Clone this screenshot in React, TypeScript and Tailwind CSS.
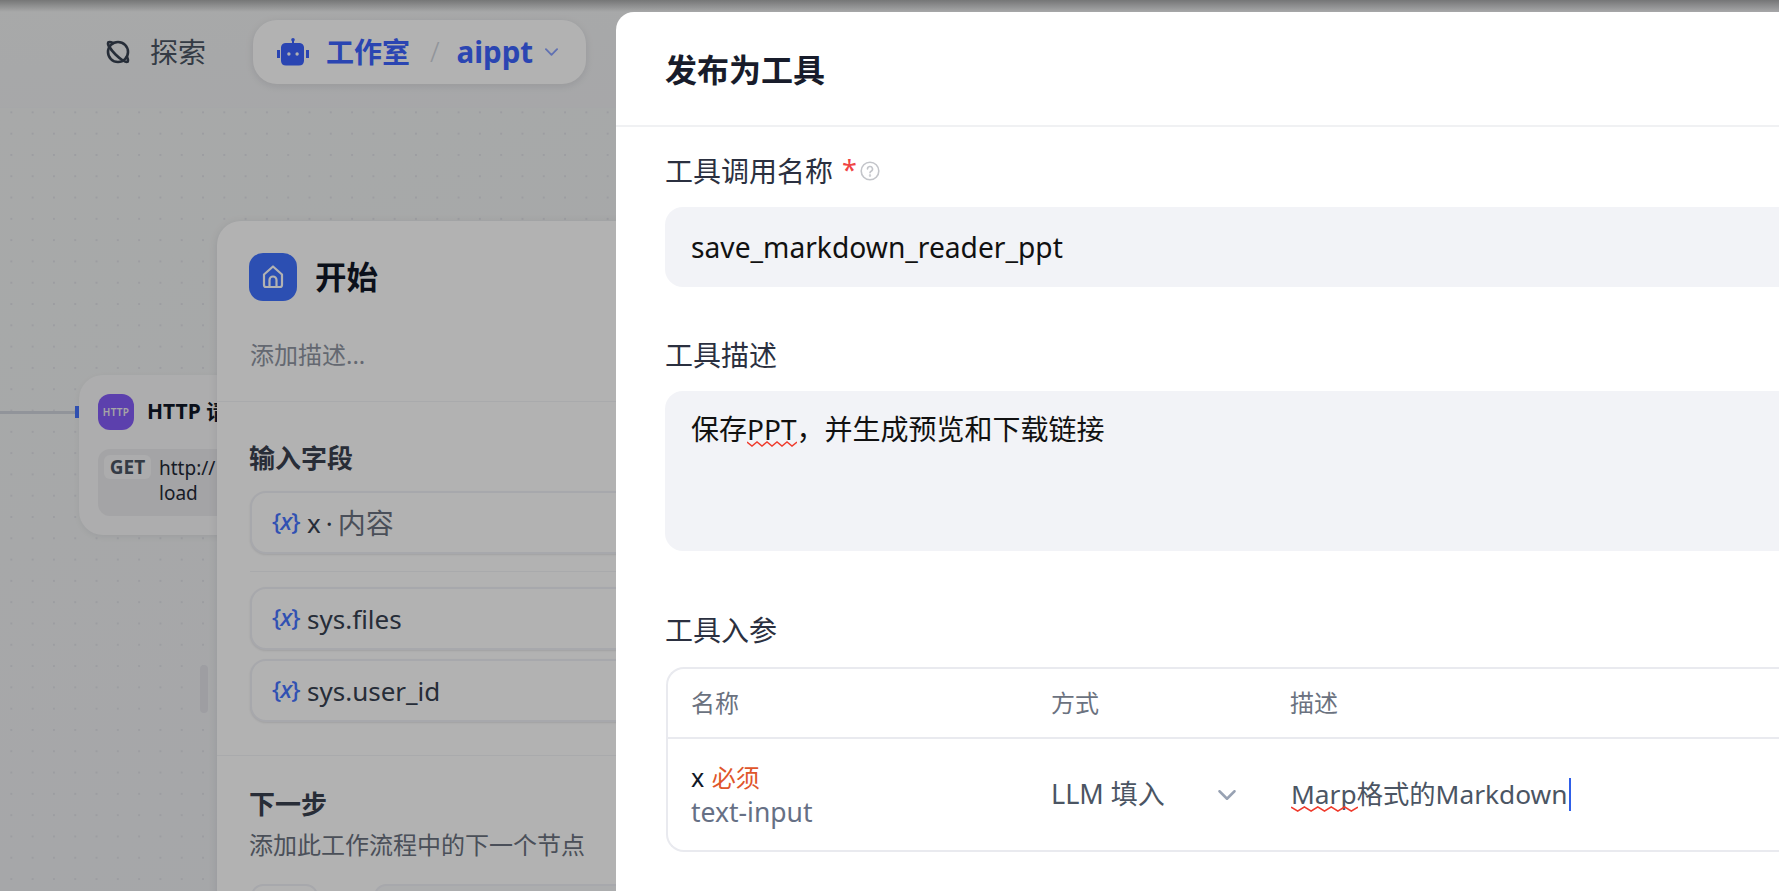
import type { ReactNode } from 'react';

function PlanetIcon() {
  return (
    <svg className="-ml-px" width="28" height="28" viewBox="0 0 28 28" fill="none" stroke="currentColor" strokeWidth="2.600" strokeLinecap="round">
      <circle cx="14" cy="14" r="10" />
      <g transform="rotate(45 14 14)">
        <path d="M.5 14A13.500 3.500 0 0 0 27.500 14" />
        <path d="M.5 14c0-1.200 1.200-2 3.500-2.800M27.500 14c0-1.200-1.200-2-3.500-2.800" />
      </g>
    </svg>
  );
}

function RobotIcon() {
  return (
    <svg width="32" height="28" viewBox="0 0 32 28" fill="#3d63ff">
      <circle cx="16" cy="1.800" r="1.800" />
      <rect x="15" y="2" width="2" height="4" />
      <path fillRule="evenodd" d="M9 5h14a5 5 0 0 1 4 4v14a5 5 0 0 1-5 4.500H9a5 5 0 0 1-5-4.500V9a5 5 0 0 1 5-4ZM10.200 16a1.700 1.700 0 1 0 3.400 0 1.700 1.700 0 0 0-3.400 0Zm8.200 0a1.700 1.700 0 1 0 3.400 0 1.700 1.700 0 0 0-3.400 0Z" />
      <rect x="0" y="12" width="3" height="8" />
      <rect x="29" y="12" width="3" height="8" />
    </svg>
  );
}

function HomeIcon() {
  return (
    <svg width="24" height="26" viewBox="0 0 24 26" fill="none" stroke="white" strokeWidth="2.200" strokeLinejoin="round">
      <path d="M3 10.500 12 2.500l9 8V21a2 2 0 0 1-2 2H5a2 2 0 0 1-2-2Z" />
      <path d="M8.500 23v-7a3.500 3.500 0 0 1 7 0v7" />
    </svg>
  );
}

function Chevron({ className }: { className: string }) {
  return (
    <svg className={className} viewBox="0 0 14 8" fill="none" stroke="currentColor" strokeWidth="2" strokeLinecap="round" strokeLinejoin="round">
      <path d="M1 1l6 6 6-6" />
    </svg>
  );
}

function Squiggle({ className }: { className: string }) {
  return (
    <svg className={className} viewBox="0 0 50 6" fill="none" stroke="#ef3b2d" strokeWidth="1.400" preserveAspectRatio="none">
      <path d="M0 1l5 4 5-4 5 4 5-4 5 4 5-4 5 4 5-4 5 4 5-4" />
    </svg>
  );
}

function VarRow({ children, className }: { children: ReactNode; className: string }) {
  return (
    <div className={`flex h-[63px] items-center rounded-2xl border-2 border-[#f0f1f6] bg-white pl-5 shadow-[0_1px_2px_rgba(16,24,40,0.1)] ${className}`}>
      <span className="mb-[3px] mr-[8px] w-[27px] whitespace-nowrap text-[24px] font-medium leading-none tracking-[-1px] text-[#4775ff]">
        {'{'}<span className="italic">x</span>{'}'}
      </span>
      <span className="flex items-center text-[26px] leading-none text-[#374151]">{children}</span>
    </div>
  );
}

function Canvas() {
  return (
    <div className="relative flex-1 overflow-hidden bg-gradient-to-br from-[#f1f3f2] to-[#ebecf2]">
      <div className="absolute inset-0 bg-[radial-gradient(circle,#e0e1e7_1.100px,transparent_1.500px)] bg-[size:21.3px_21.3px] bg-[position:0.7px_15px]" />

      {/* edge into the http node */}
      <div className="absolute left-0 top-[303px] h-[3px] w-[75px] bg-[#d0d5dd]" />
      <div className="absolute left-[75px] top-[298px] h-[12px] w-[4px] bg-[#4775ff]" />

      <div className="absolute left-[79px] top-[267px] h-[160px] w-[300px] rounded-3xl bg-[#f8f8f9] px-[19px] pt-[19px] shadow-[0_2px_6px_rgba(16,24,40,0.06)]">
        <div className="flex items-center">
          <div className="flex h-9 w-9 items-center justify-center rounded-xl bg-[#855cf8] text-[10px] font-semibold tracking-wide text-[#eee]">HTTP</div>
          <span className="ml-[13px] text-[21px] font-bold text-[#111827]">HTTP 请求</span>
        </div>
        <div className="mt-[19px] flex h-[67px] rounded-xl bg-[#ebebee] p-[6px]">
          <span className="flex h-6 w-[47px] items-center justify-center rounded-md bg-[#f7f7f8] text-[19px] font-bold text-[#4b5563]">GET</span>
          <span className="ml-2 w-[100px] pt-px text-[19px] leading-[25px] text-[#1f2937]">http://<br />load</span>
        </div>
      </div>

      <div className="absolute left-[200px] top-[557px] h-12 w-2 rounded-full bg-[#e2e3e9]" />

      <div className="absolute left-[217px] top-[113px] h-[800px] w-[600px] rounded-3xl bg-white shadow-[0_2px_10px_rgba(16,24,40,0.1)]">
        <div className="flex items-center pl-8 pt-8">
          <div className="flex h-12 w-12 items-center justify-center rounded-[14px] bg-[#4072ff]">
            <HomeIcon />
          </div>
          <span className="ml-[18px] text-[31.5px] font-bold leading-none text-[#111827]">开始</span>
        </div>
        <div className="pl-[33px] pt-[42px] text-[24px] leading-none text-[#9096a3]">添加描述...</div>
        <div className="mt-[34px] border-t border-[#f3f4f6]" />
        <div className="pl-8 pt-[43px] text-[26px] font-bold leading-none text-[#3a4150]">输入字段</div>
        <div className="pl-[33px]">
          <VarRow className="mt-[20px]">
            x<span className="mx-[5px]">·</span><span className="text-[28px] text-[#6b7280]">内容</span>
          </VarRow>
          <div className="mt-[17px] border-t border-[#f3f4f6]" />
          <VarRow className="mt-[15px]">sys.files</VarRow>
          <VarRow className="mt-[9px]">sys.user_id</VarRow>
        </div>
        <div className="mt-[33px] border-t border-[#f3f4f6]" />
        <div className="pl-8 pt-[35px] text-[26px] font-bold leading-none text-[#3a4150]">下一步</div>
        <div className="pl-8 pt-[16px] text-[24px] leading-none text-[#6b7280]">添加此工作流程中的下一个节点</div>
        <div className="flex pl-[34px] pt-[27px]">
          <div className="h-[60px] w-[67px] rounded-xl border-2 border-[#f0f1f6] bg-white" />
          <div className="ml-[56px] h-[60px] flex-1 rounded-xl border-2 border-[#f0f1f6] bg-[#f7f8fa]" />
        </div>
      </div>
    </div>
  );
}

function Drawer() {
  return (
    <div className="absolute bottom-0 left-[616px] right-0 top-3 overflow-hidden rounded-tl-[18px] bg-white">
      <div className="flex h-[115px] items-center border-b-2 border-[#f0f1f3] pl-[49px] pt-[2px]">
        <h2 className="text-[32px] font-bold leading-none text-[#181c2b]">发布为工具</h2>
      </div>
      <div className="pl-[49px]">
        <div className="flex h-[80px] items-center pt-2 text-[28px] leading-none text-[#2b3040]">
          工具调用名称
          <span className="mb-[4px] ml-[9px] text-[27px] text-[#ef4444]">*</span>
          <svg className="ml-[3px]" width="20" height="20" viewBox="0 0 20 20" fill="none" stroke="#c3c5ca" strokeWidth="1.600" strokeLinecap="round">
            <circle cx="10" cy="10" r="8.800" />
            <path d="M7.500 8a2.500 2.500 0 1 1 3.600 2.200c-.8.400-1.100.900-1.100 1.600" />
            <circle cx="10" cy="14.500" r=".4" />
          </svg>
        </div>
        <div className="flex h-20 items-center rounded-l-[18px] bg-[#f2f3f7] pl-[26px] text-[28.2px] text-[#111]">save_markdown_reader_ppt</div>
        <div className="flex h-[104px] items-end pb-[22px] text-[28px] leading-none text-[#2b3040]">工具描述</div>
        <div className="relative h-40 rounded-l-[18px] bg-[#f2f3f7] pl-[26px] pt-5 text-[28px] leading-[36px] text-[#111]">
          保存PPT，并生成预览和下载链接
          <Squiggle className="absolute left-[82px] top-[50px] h-[6px] w-[50px]" />
        </div>
        <div className="flex h-[116px] items-end pb-[23px] text-[28px] leading-none text-[#2b3040]">工具入参</div>
        <div className="ml-px h-[185px] rounded-l-[18px] border-y-2 border-l-2 border-[#e9eaef]">
          <div className="grid h-[70px] grid-cols-[360px_239px_1fr] items-center border-b-2 border-[#e9eaef] pl-[23px] text-[24px] leading-none text-[#6b7280]">
            <span>名称</span>
            <span>方式</span>
            <span>描述</span>
          </div>
          <div className="grid h-[111px] grid-cols-[360px_240px_1fr] items-center pl-[23px]">
            <div>
              <div className="text-[25px] leading-[35px] text-[#111827]">x <span className="ml-px text-[24px] text-[#e0562b]">必须</span></div>
              <div className="text-[26.500px] leading-[35px] text-[#667085]">text-input</div>
            </div>
            <div className="flex items-center text-[27px] text-[#4b5563]">
              <span className="w-[167px]">LLM 填入</span>
              <Chevron className="h-[10px] w-[18px] text-[#98a2b3]" />
            </div>
            <div className="relative flex items-center text-[26.300px] text-[#4b5563]">
              Marp格式的Markdown
              <span className="ml-px h-[33px] w-[2px] bg-[#2f5fe8]" />
              <Squiggle className="absolute left-0 top-[31px] h-[6px] w-[67px]" />
            </div>
          </div>
        </div>
      </div>
    </div>
  );
}

export default function App() {
  return (
    <div className="relative flex h-screen flex-col overflow-hidden bg-[#f4f6f8] font-['Noto_Sans','Noto_Sans_CJK_SC',sans-serif]">
      <header className="flex h-[108px] shrink-0 items-center border-b border-[#eef0f3] bg-gradient-to-br from-[#f1f2f2] to-[#eeeff3] pb-1 pl-[105px]">
        <div className="flex items-center text-[#374151]">
          <PlanetIcon />
          <span className="ml-[18px] text-[28px] leading-none text-[#4b5563]">探索</span>
        </div>
        <div className="ml-[47px] flex h-16 w-[333px] items-center rounded-3xl bg-white pl-6 shadow-[0_2px_8px_rgba(16,24,40,0.1)]">
          <RobotIcon />
          <span className="ml-[17px] text-[28px] font-bold leading-none text-[#3d63ff]">工作室</span>
          <span className="ml-[20px] text-[27.500px] font-light leading-none text-[#d0d5dd]">/</span>
          <span className="ml-[17px] text-[29.500px] font-bold leading-none text-[#3d63ff]">aippt</span>
          <Chevron className="ml-[12px] h-[8px] w-[13px] text-[#8ba3ff]" />
        </div>
      </header>
      <Canvas />

      {/* dim layer under the drawer */}
      <div className="absolute inset-0 bg-black/30" />
      <div className="absolute inset-x-0 top-0 h-3 bg-gradient-to-b from-black/30 to-transparent" />
      <Drawer />
    </div>
  );
}
